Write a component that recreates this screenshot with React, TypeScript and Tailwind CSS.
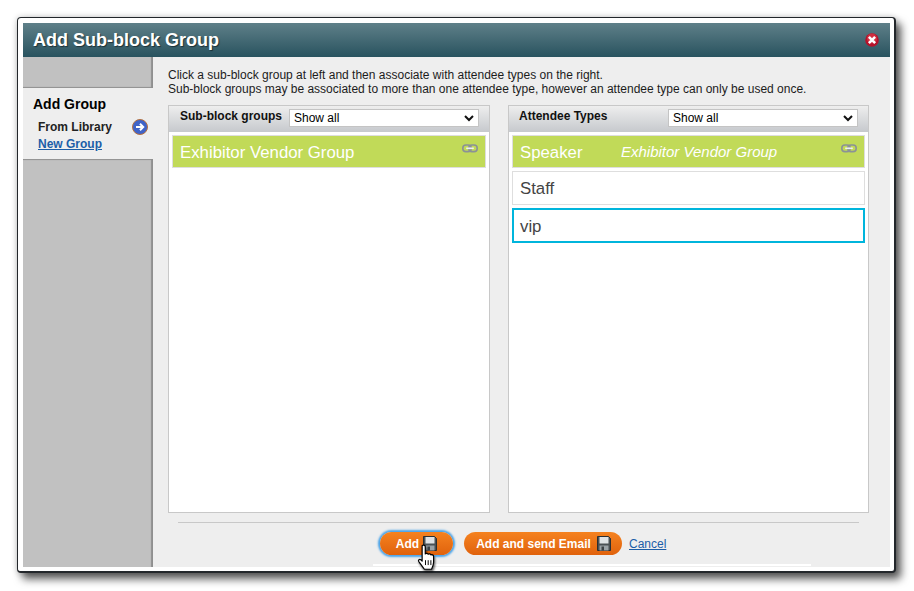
import React from 'react';

const SaveIcon = () => (
  <svg width="14" height="15" viewBox="0 0 14 15" className="shrink-0">
    <path d="M0.5 0.5h11l2 2v12h-13z" fill="#4a5155" stroke="#2b2f32" />
    <rect x="2.5" y="1" width="9" height="6.5" fill="#dfe3e6" />
    <rect x="2.5" y="9.5" width="9" height="5" fill="#9aa2a7" />
    <rect x="4.5" y="10.5" width="2.5" height="4" fill="#3b4145" />
  </svg>
);

const LinkIcon = () => (
  <svg width="16" height="9" viewBox="0 0 16 9" className="mt-[-6px] shrink-0">
    <rect x="0.8" y="1" width="8.4" height="6.6" rx="3.2" fill="none" stroke="#8b9296" strokeWidth="1.6" />
    <rect x="6.8" y="1" width="8.4" height="6.6" rx="3.2" fill="none" stroke="#8b9296" strokeWidth="1.6" />
    <rect x="4.2" y="3.5" width="7.6" height="1.6" fill="#eef0f1" />
  </svg>
);

const Filter = () => (
  <div className="relative h-[18px] w-[190px]">
    <select className="block h-[18px] w-full appearance-none border border-[#c4c4c4] bg-white pl-[4px] text-[12px] leading-[16px] text-black">
      <option>Show all</option>
    </select>
    <svg width="10" height="7" viewBox="0 0 10 7" className="pointer-events-none absolute right-[5px] top-[6px]">
      <path d="M1 1l4 4 4-4" fill="none" stroke="#111" strokeWidth="2" />
    </svg>
  </div>
);

const Item = ({ label, linked, active }: { label: string; linked?: string; active?: boolean }) => {
  if (linked !== undefined) {
    return (
      <div className="flex h-[33px] items-center justify-between border border-[#dedede] bg-[#c1da58] pl-[7px] pr-[7px] text-[16.8px] text-white">
        <div className="flex items-center pt-[1px]">
          <span className={linked ? 'w-[101px] pt-[2px]' : 'pt-[2px]'}>{label}</span>
          {linked && <span className="text-[15px] italic">{linked}</span>}
        </div>
        <LinkIcon />
      </div>
    );
  }
  return (
    <div className={active
      ? 'flex h-[35px] items-center border-[2px] border-[#00b5dc] bg-white pl-[6px] pt-[3px] text-[16.8px] text-[#444]'
      : 'flex h-[34px] items-center border border-[#dedede] bg-white pl-[7px] pt-[2px] text-[16.8px] text-[#444]'}>
      {label}
    </div>
  );
};

const App = () => {
  return (
    <div className="h-[591px] w-[914px] overflow-hidden bg-white pl-[17px] pt-[17px] font-['Liberation_Sans',Arial,sans-serif]">
      {/* Dialog */}
      <div className="flex h-[556px] w-[879px] flex-col rounded-[4px] border-t border-l border-r-[2px] border-b-[2px] border-[#23272b] bg-white pt-[5px] pl-[5px] pr-[4px] pb-[4px] shadow-[5px_6px_8px_rgba(0,0,0,0.65),0_0_6px_rgba(0,0,0,0.2)]">
        <div className="flex h-[34px] shrink-0 items-center justify-between bg-gradient-to-b from-[#5f8089] to-[#28535f] pl-[10px] pr-[11px]">
          <h1 className="text-[18px] font-bold text-white [text-shadow:1px_1px_1px_rgba(0,0,0,0.5)]">Add Sub-block Group</h1>
          <svg width="14" height="14" viewBox="0 0 14 14">
            <circle cx="7" cy="7" r="6.8" fill="#b5122a" />
            <circle cx="7" cy="5.5" r="5" fill="#dc3a4a" opacity="0.7" />
            <path d="M3.9 3.9l6.2 6.2M10.1 3.9l-6.2 6.2" stroke="white" strokeWidth="2.6" />
          </svg>
        </div>

        <div className="flex min-h-0 flex-1 bg-[#eeeeee]">
          {/* Left nav */}
          <div className="flex w-[130px] shrink-0 flex-col">
            <div className="h-[31px] bg-[#c1c1c1] shadow-[inset_-3px_-2px_1px_-1px_#8f8f8f]" />
            <div className="h-[71px] pl-[10px] pt-[8px]">
              <div className="text-[14px] font-bold leading-[16px] text-black">Add Group</div>
              <div className="mt-[7px] flex h-[16px] items-center pl-[5px] pr-[5px] text-[12px] font-bold text-[#222]">
                <span>From Library</span>
                <span className="ml-auto flex h-[16px] w-[16px] items-center justify-center rounded-full border-[1.5px] border-[#b5703f] bg-[#3f63c8]">
                  <svg width="10" height="10" viewBox="0 0 10 10">
                    <path d="M1 5h7M5 1.8 8.2 5 5 8.2" fill="none" stroke="white" strokeWidth="2" />
                  </svg>
                </span>
              </div>
              <a href="#" className="ml-[5px] block text-[12px] font-bold leading-[18px] text-[#1c5ea8] underline">New Group</a>
            </div>
            <div className="flex-1 bg-[#c1c1c1] shadow-[inset_-3px_2px_1px_-1px_#8f8f8f]" />
          </div>

          {/* Main */}
          <div className="flex min-w-0 flex-1 flex-col pl-[15px] pr-[21px] pt-[11px]">
            <p className="text-[12px] leading-[14px] text-[#1c1c1c]">
              Click a sub-block group at left and then associate with attendee types on the right.
              <br />
              Sub-block groups may be associated to more than one attendee type, however an attendee type can only be used once.
            </p>

            <div className="mt-[9px] flex h-[408px] gap-[18px]">
              <section className="flex w-[322px] flex-col border border-[#c8c8c8] bg-white">
                <div className="flex h-[26px] shrink-0 items-start justify-between bg-gradient-to-b from-[#eeeeee] to-[#c6c9cd] pl-[11px] pr-[10px] pt-[3px]">
                  <h2 className="text-[12px] font-bold leading-[14px] text-[#111]">Sub-block groups</h2>
                  <Filter />
                </div>
                <div className="flex flex-col gap-[3px] p-[3px]">
                  <Item label="Exhibitor Vendor Group" linked="" />
                </div>
              </section>

              <section className="flex w-[361px] flex-col border border-[#c8c8c8] bg-white">
                <div className="flex h-[26px] shrink-0 items-start justify-between bg-gradient-to-b from-[#eeeeee] to-[#c6c9cd] pl-[10px] pr-[10px] pt-[3px]">
                  <h2 className="text-[12px] font-bold leading-[14px] text-[#111]">Attendee Types</h2>
                  <Filter />
                </div>
                <div className="flex flex-col gap-[3px] p-[3px]">
                  <Item label="Speaker" linked="Exhibitor Vendor Group" />
                  <Item label="Staff" />
                  <Item label="vip" active />
                </div>
              </section>
            </div>

            <div className="mx-[10px] mt-[9px] border-t border-[#c8c8c8]" />

            {/* Actions */}
            <div className="relative mt-[9px] flex items-center pl-[212px]">
              <button className="flex h-[23px] w-[73px] items-center justify-center gap-[4px] rounded-full bg-gradient-to-b from-[#f5821f] to-[#e0620c] text-[12px] font-bold text-white shadow-[0_0_2px_2px_#4aa3e8]">
                Add <SaveIcon />
              </button>
              <button className="ml-[11px] flex h-[23px] w-[158px] items-center justify-center gap-[6px] rounded-full bg-gradient-to-b from-[#f5821f] to-[#e0620c] pl-[1px] text-[12px] font-bold text-white">
                Add and send Email <SaveIcon />
              </button>
              <a href="#" className="ml-[7px] text-[12px] text-[#1c5ea8] underline">Cancel</a>
              {/* cursor */}
              <svg width="20" height="27" viewBox="0 0 18 25" className="absolute left-[249px] top-[12px] drop-shadow-[1px_2px_1px_rgba(0,0,0,0.6)]">
                <path d="M4.5 1.6c.9-1.1 2.9-.6 2.9 1v6.6c.7-.8 2.3-.7 2.7.3.7-.6 2.2-.4 2.6.6.9-.5 2.4 0 2.4 1.4v5.5c0 2.6-1 4.2-2 6.4H6.6c-1.4-1.9-3.3-4.6-5.2-7.1-.9-1.3.6-2.8 1.9-1.7l1.2 1.3z" fill="white" stroke="black" strokeWidth="1.1" strokeLinejoin="round" />
                <path d="M7.6 15v4.5M10.1 15v4.5M12.6 15v4.5" stroke="black" strokeWidth="0.9" />
              </svg>
            </div>
            <div className="ml-[205px] mt-[9px] h-[2px] w-[438px] shrink-0 bg-white" />
          </div>
        </div>
      </div>
    </div>
  );
};

export default App;
